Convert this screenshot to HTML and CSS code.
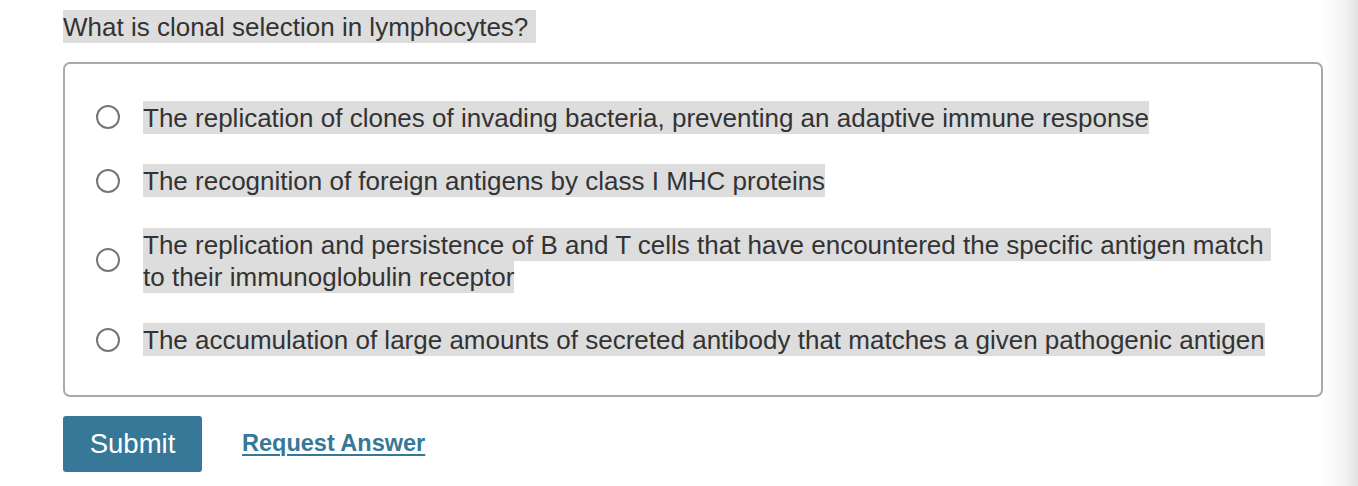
FILE: index.html
```html
<!DOCTYPE html>
<html lang="en">
<head>
    <meta charset="UTF-8">
    <meta name="viewport" content="width=device-width, initial-scale=1.0">
    <title>Question - Clonal Selection</title>
    <link rel="stylesheet" href="styles.css">
</head>
<body>
    <main class="question">
        <div class="prompt"><span class="mark">What is clonal selection in lymphocytes?&nbsp;</span></div>
        <form class="choices">
            <label class="choice">
                <input type="radio" name="answer" value="a">
                <span class="choice-text"><span class="mark">The replication of clones of invading bacteria, preventing an adaptive immune response</span></span>
            </label>
            <label class="choice">
                <input type="radio" name="answer" value="b">
                <span class="choice-text"><span class="mark">The recognition of foreign antigens by class I MHC proteins</span></span>
            </label>
            <label class="choice">
                <input type="radio" name="answer" value="c">
                <span class="choice-text"><span class="mark">The replication and persistence of B and T cells that have encountered the specific antigen match&nbsp;</span> <span class="mark">to their immunoglobulin receptor</span></span>
            </label>
            <label class="choice">
                <input type="radio" name="answer" value="d">
                <span class="choice-text"><span class="mark">The accumulation of large amounts of secreted antibody that matches a given pathogenic antigen</span></span>
            </label>
        </form>
        <div class="actions">
            <button type="button" class="submit-btn">Submit</button>
            <a href="#" class="request-link">Request Answer</a>
        </div>
    </main>
</body>
</html>
```

FILE: styles.css
```css
* {
    margin: 0;
    padding: 0;
    box-sizing: border-box;
}
body {
    font-family: 'Liberation Sans', Arial, Helvetica, sans-serif;
    color: #333333;
    background: linear-gradient(to right, #ffffff 1322px, #f3f3f3 1345px, #e2e2e2 100%);
    min-height: 100vh;
}
.question { padding: 10px 0 0 63px; width: 1323px; }
.prompt { font-size: 26px; line-height: 32px; height: 32px; }
.mark { background: #dddddd; padding: 1.5px 0; }
.choices { margin-top: 20px; border: 2px solid #a9a9a9; border-radius: 7px; background: #fff; padding: 37px 41px 39px 31px; display: flex; flex-direction: column; gap: 31.5px; }
.choice { display: flex; align-items: center; gap: 23px; cursor: pointer; }
.choice input { appearance: none; -webkit-appearance: none; flex: none; width: 24px; height: 24px; border: 2px solid #767676; border-radius: 50%; background: #fff; margin: 0; }
.choice input:checked { background: radial-gradient(circle, #377898 0 5px, #fff 6px); }
.choice-text { font-size: 26px; line-height: 32px; }
.actions { display: flex; align-items: center; gap: 40px; margin-top: 19px; }
.submit-btn { width: 139px; height: 56px; background: #377898; color: #fff; border: none; border-radius: 3px; font-family: inherit; font-size: 27.5px; cursor: pointer; }
.request-link { color: #377898; font-weight: 700; font-size: 23.5px; text-decoration: underline; text-underline-offset: 3px; text-decoration-thickness: 2px; }
```
